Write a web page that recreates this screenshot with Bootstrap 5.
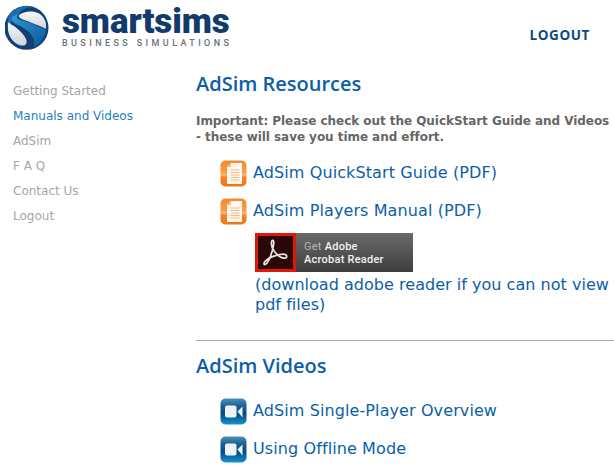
<!DOCTYPE html>
<html lang="en">
<head>
    <meta charset="UTF-8">
    <meta name="viewport" content="width=device-width, initial-scale=1">
    <title>AdSim Resources</title>
    <link href="https://cdn.jsdelivr.net/npm/bootstrap@5.3.0/dist/css/bootstrap.min.css" rel="stylesheet">
    <style>
        body {
            font-family: "DejaVu Sans", Verdana, sans-serif;
            background-color: #fff;
            overflow: hidden;
        }
        a { text-decoration: none; }
        .page-top { height: 70px; padding: 5px 24px 0 5px; }
        .brand-wrap { gap: 13px; }
        .brand-name {
            font-family: "Roboto", sans-serif;
            font-weight: 900;
            font-size: 35px;
            line-height: 33px;
            letter-spacing: -0.1px;
            color: #123a6b;
            white-space: nowrap;
        }
        .brand-sub {
            font-family: "Roboto", sans-serif;
            font-size: 9px;
            font-weight: 500;
            line-height: 11px;
            letter-spacing: 3.4px;
            color: #6d7074;
            white-space: nowrap;
        }
        .logout-top {
            font-family: "Open Sans", sans-serif;
            font-weight: 700;
            font-size: 13.5px;
            letter-spacing: 0.6px;
            color: #0d4a7d;
            margin-top: 20px;
        }
        .side-col { width: 196px; padding: 9px 0 0 13px; flex: none; }
        .side-link {
            display: block;
            font-size: 12px;
            line-height: 25px;
            color: #a6a6a6;
        }
        .side-link.on { color: #1f7fc4; }
        .main-col { flex: 1; min-width: 0; }
        .sect-title {
            font-family: "Open Sans", sans-serif;
            font-weight: 600;
            font-size: 20px;
            line-height: 28px;
            color: #0b5ea8;
            margin: 0;
        }
        .notice {
            font-size: 12px;
            font-weight: 700;
            line-height: 16px;
            letter-spacing: -0.05px;
            color: #666;
            margin: 15px 0 0;
            white-space: nowrap;
        }
        .res-list { margin-top: 9px; }
        .res-list.vids { margin-top: 12px; }
        .res-row {
            display: flex;
            align-items: center;
            gap: 6px;
            height: 38px;
            padding-left: 24px;
            font-size: 16px;
            letter-spacing: 0.1px;
            color: #0b5ea8;
        }
        .res-icon { flex: none; display: block; }
        .get-reader {
            display: flex;
            width: 158px;
            height: 39px;
            margin: 3px 0 0 59px;
            background: linear-gradient(#6a6a6a, #3e3e3e);
        }
        .reader-mark {
            width: 41px;
            height: 39px;
            flex: none;
            background-color: #2a0808;
            border: 3px solid #e0170b;
        }
        .reader-text {
            font-family: "Roboto", sans-serif;
            font-size: 11px;
            font-weight: 500;
            line-height: 13px;
            letter-spacing: 0.25px;
            color: #f2f2f2;
            padding: 7px 0 0 8px;
        }
        .reader-text span { color: #b5b5b5; font-weight: 400; }
        .reader-help {
            font-size: 16px;
            line-height: 20px;
            letter-spacing: 0.03px;
            color: #0b5ea8;
            margin: 3px 0 0 59px;
        }
        .split { border-top: 1px solid #a9a9a9; margin: 25px 0 11px; }
    </style>
</head>
<body>
    <svg width="0" height="0" class="position-absolute">
        <defs>
            <linearGradient id="orangeFill" x1="0" y1="0" x2="0" y2="1">
                <stop offset="0" stop-color="#f58a2c"/>
                <stop offset="0.45" stop-color="#f79a48"/>
                <stop offset="0.55" stop-color="#fbb77f"/>
                <stop offset="0.65" stop-color="#f5832a"/>
                <stop offset="1" stop-color="#ef7414"/>
            </linearGradient>
            <linearGradient id="blueFill" x1="0" y1="0" x2="0" y2="1">
                <stop offset="0" stop-color="#4b8fbb"/>
                <stop offset="0.3" stop-color="#1a5f92"/>
                <stop offset="0.6" stop-color="#064b7f"/>
                <stop offset="1" stop-color="#0f97d2"/>
            </linearGradient>
            <symbol id="pdfIcon" viewBox="0 0 27 27">
                <rect x="0.5" y="0.5" width="26" height="26" rx="5" fill="url(#orangeFill)"/>
                <path d="M11 3h11v21H7V7z" fill="#fff6ec"/>
                <path d="M7 7h4V3z" fill="#f9b77c"/>
                <path d="M10.500 10h9M10.500 12.500h9M10.500 15h9M10.500 17.500h9M10.500 20h9" stroke="#f9b98a" stroke-width="1.200"/>
            </symbol>
            <symbol id="videoIcon" viewBox="0 0 27 27">
                <rect x="0.500" y="0.500" width="26" height="26" rx="5" fill="url(#blueFill)"/>
                <rect x="5" y="7.500" width="11.500" height="12" rx="2" fill="#eef3f6"/>
                <path d="M17.500 13.500l5-5v11z" fill="#eef3f6"/>
            </symbol>
        </defs>
    </svg>

    <div class="page-top d-flex justify-content-between align-items-start">
        <div class="d-flex brand-wrap">
            <svg width="44" height="46" viewBox="5 5 44 46" aria-hidden="true">
                <defs>
                    <linearGradient id="bandFill" x1="0" y1="0" x2="1" y2="1">
                        <stop offset="0" stop-color="#2f9ad8"/>
                        <stop offset="1" stop-color="#0a5796"/>
                    </linearGradient>
                    <linearGradient id="shineFill" x1="0" y1="0" x2="0" y2="1">
                        <stop offset="0" stop-color="#f6f7f8"/>
                        <stop offset="1" stop-color="#cfd6dc"/>
                    </linearGradient>
                </defs>
                <circle cx="26.500" cy="27.800" r="22" fill="#123f74"/>
                <path d="M9 15C14 8 24 4 34 7c-8 0-14 3-16 8-2 4-5 6-11 10z" fill="#1c6fae"/>
                <path d="M19 15C25 10 38 10 43 17c3 4 3.500 8 3 12-6-3-16-7-22-9-3-1-6-3-5-5z" fill="url(#shineFill)"/>
                <path d="M8 24c-1 8 2 16 9 20 4 2 8 2 9 0 3-4-4-12-12-18-2-1-4-2-5-4z" fill="url(#shineFill)"/>
                <path d="M18 14c-3 5 2 6 6 7 8 2 16 6 22 9-1 8-6 14-12 17 2-9-4-16-14-21-5-2-9-4-8-9z" fill="url(#bandFill)"/>
            </svg>
            <div>
                <div class="brand-name">smartsims</div>
                <div class="brand-sub">BUSINESS SIMULATIONS</div>
            </div>
        </div>
        <a href="#" class="logout-top">LOGOUT</a>
    </div>

    <div class="d-flex">
        <nav class="side-col">
            <a href="#" class="side-link">Getting Started</a>
            <a href="#" class="side-link on">Manuals and Videos</a>
            <a href="#" class="side-link">AdSim</a>
            <a href="#" class="side-link">F A Q</a>
            <a href="#" class="side-link">Contact Us</a>
            <a href="#" class="side-link">Logout</a>
        </nav>
        <main class="main-col">
            <h2 class="sect-title">AdSim Resources</h2>
            <p class="notice">Important: Please check out the QuickStart Guide and Videos<br>- these will save you time and effort.</p>
            <div class="res-list">
                <a href="#" class="res-row"><svg class="res-icon" width="27" height="27"><use href="#pdfIcon"/></svg>AdSim QuickStart Guide (PDF)</a>
                <a href="#" class="res-row"><svg class="res-icon" width="27" height="27"><use href="#pdfIcon"/></svg>AdSim Players Manual (PDF)</a>
            </div>
            <a href="#" class="get-reader">
                <span class="reader-mark d-flex align-items-center justify-content-center">
                    <svg width="30" height="30" viewBox="1 1 26 26" aria-hidden="true"><path d="M4 24C7 24 11 14 12 6 12.500 2 10 2 10 6c0 4 4 10 9 12 5 2 6-3 1-3-6 0-14 4-16 7-.5 1-.5 2 0 2z" fill="none" stroke="#e9e2e2" stroke-width="1.500"/></svg>
                </span>
                <span class="reader-text"><span>Get</span> Adobe<br>Acrobat Reader</span>
            </a>
            <a href="#" class="reader-help d-block">(download adobe reader if you can not view<br>pdf files)</a>
            <div class="split"></div>
            <h2 class="sect-title">AdSim Videos</h2>
            <div class="res-list vids">
                <a href="#" class="res-row"><svg class="res-icon" width="27" height="27"><use href="#videoIcon"/></svg>AdSim Single-Player Overview</a>
                <a href="#" class="res-row"><svg class="res-icon" width="27" height="27"><use href="#videoIcon"/></svg>Using Offline Mode</a>
            </div>
        </main>
    </div>
    <script src="https://cdn.jsdelivr.net/npm/bootstrap@5.3.0/dist/js/bootstrap.bundle.min.js"></script>
</body>
</html>
